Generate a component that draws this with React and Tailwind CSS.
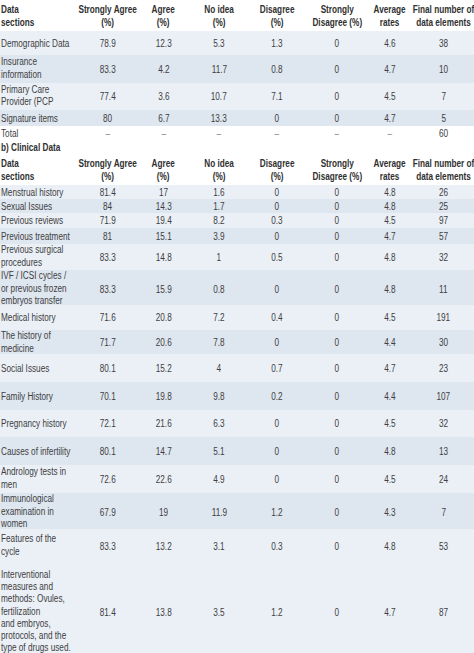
import React from "react";

const GRID = "grid grid-cols-[80px_56px_55px_56px_60px_60px_46px_61px]";
const LIGHT = "bg-[#ebf0f7]";
const DARK = "bg-[#dee6f0]";

const header = [
  "Data\nsections",
  "Strongly Agree\n(%)",
  "Agree\n(%)",
  "No idea\n(%)",
  "Disagree\n(%)",
  "Strongly\nDisagree (%)",
  "Average\nrates",
  "Final number of\ndata elements",
];

const topRows = [
  { h: "h-[24px]", bg: LIGHT, label: "Demographic Data", v: ["78.9", "12.3", "5.3", "1.3", "0", "4.6", "38"] },
  { h: "h-[28px]", bg: DARK, label: "Insurance\ninformation", v: ["83.3", "4.2", "11.7", "0.8", "0", "4.7", "10"] },
  { h: "h-[27px]", bg: LIGHT, label: "Primary Care\nProvider (PCP", v: ["77.4", "3.6", "10.7", "7.1", "0", "4.5", "7"] },
  { h: "h-[16px]", bg: DARK, label: "Signature items", v: ["80", "6.7", "13.3", "0", "0", "4.7", "5"] },
  { h: "h-[14px]", bg: "bg-white", label: "Total", v: ["–", "–", "–", "–", "–", "–", "60"] },
];

const clinicalRows = [
  { h: "h-[14px]", bg: LIGHT, label: "Menstrual history", v: ["81.4", "17", "1.6", "0", "0", "4.8", "26"] },
  { h: "h-[14px]", bg: DARK, label: "Sexual Issues", v: ["84", "14.3", "1.7", "0", "0", "4.8", "25"] },
  { h: "h-[15px]", bg: LIGHT, label: "Previous reviews", v: ["71.9", "19.4", "8.2", "0.3", "0", "4.5", "97"] },
  { h: "h-[16px]", bg: DARK, label: "Previous treatment", v: ["81", "15.1", "3.9", "0", "0", "4.7", "57"] },
  { h: "h-[26px]", bg: LIGHT, label: "Previous surgical\nprocedures", v: ["83.3", "14.8", "1", "0.5", "0", "4.8", "32"] },
  { h: "h-[35px]", bg: DARK, label: "IVF / ICSI cycles /\nor previous frozen\nembryos transfer", v: ["83.3", "15.9", "0.8", "0", "0", "4.8", "11"] },
  { h: "h-[25px]", bg: LIGHT, label: "Medical history", v: ["71.6", "20.8", "7.2", "0.4", "0", "4.5", "191"] },
  { h: "h-[24px]", bg: DARK, label: "The history of\nmedicine", v: ["71.7", "20.6", "7.8", "0", "0", "4.4", "30"] },
  { h: "h-[28px]", bg: LIGHT, label: "Social Issues", v: ["80.1", "15.2", "4", "0.7", "0", "4.7", "23"] },
  { h: "h-[28px]", bg: DARK, label: "Family History", v: ["70.1", "19.8", "9.8", "0.2", "0", "4.4", "107"] },
  { h: "h-[27px]", bg: LIGHT, label: "Pregnancy history", v: ["72.1", "21.6", "6.3", "0", "0", "4.5", "32"] },
  { h: "h-[28px]", bg: DARK, label: "Causes of infertility", v: ["80.1", "14.7", "5.1", "0", "0", "4.8", "13"] },
  { h: "h-[28px]", bg: LIGHT, label: "Andrology tests in\nmen", v: ["72.6", "22.6", "4.9", "0", "0", "4.5", "24"] },
  { h: "h-[36px]", bg: DARK, label: "Immunological\nexamination in\nwomen", v: ["67.9", "19", "11.9", "1.2", "0", "4.3", "7"] },
  { h: "h-[34px]", bg: LIGHT, label: "Features of the\ncycle", v: ["83.3", "13.2", "3.1", "0.3", "0", "4.8", "53"] },
  {
    h: "h-[98px]",
    bg: LIGHT,
    label:
      "Interventional\nmeasures and\nmethods: Ovules,\nfertilization\nand embryos,\nprotocols, and the\ntype of drugs used.",
    v: ["81.4", "13.8", "3.5", "1.2", "0", "4.7", "87"],
    tight: true,
  },
];

function HeaderRow() {
  return (
    <div className={`${GRID} h-[30px] bg-white items-start pt-[2px] font-bold text-[#303030] leading-[13px]`}>
      {header.map((t, i) =>
        i === 0 ? (
          <div key={i} className="pl-[1px] text-left">
            <span className="inline-block whitespace-pre scale-x-[0.82] origin-left">{t}</span>
          </div>
        ) : (
          <div key={i} className="flex justify-center">
            <span className="inline-block whitespace-pre text-center scale-x-[0.82] origin-center">{t}</span>
          </div>
        )
      )}
    </div>
  );
}

function DataRow({ row }) {
  return (
    <div className={`${GRID} ${row.h} ${row.bg} items-center text-[#3e3e3e]`}>
      <div className="pl-[1px] text-left">
        <span
          className={`inline-block whitespace-pre scale-x-[0.82] origin-left ${
            row.tight ? "leading-[12.3px]" : "leading-[12.7px]"
          }`}
        >
          {row.label}
        </span>
      </div>
      {row.v.map((x, i) => (
        <div key={i} className="flex justify-center leading-[13px]">
          <span
            className={`inline-block whitespace-pre scale-x-[0.82] origin-center ${
              x === "–" ? "text-[#8a8a8a]" : ""
            }`}
          >
            {x}
          </span>
        </div>
      ))}
    </div>
  );
}

export default function App() {
  return (
    <div
      className="w-[474px] h-[653px] overflow-hidden bg-white text-[10px]"
      style={{ fontFamily: "'Liberation Sans', Arial, sans-serif" }}
    >
      <div className="flex flex-col">
        <div className="h-[1px]" />
        <HeaderRow />
        {topRows.map((r, i) => (
          <DataRow key={i} row={r} />
        ))}
        <div className="h-[15px] flex items-center pl-[1px] font-bold text-[#303030] leading-[13px]">
          <span className="inline-block whitespace-pre scale-x-[0.82] origin-left">b) Clinical Data</span>
        </div>
        <HeaderRow />
        {clinicalRows.map((r, i) => (
          <DataRow key={i} row={r} />
        ))}
      </div>
    </div>
  );
}
